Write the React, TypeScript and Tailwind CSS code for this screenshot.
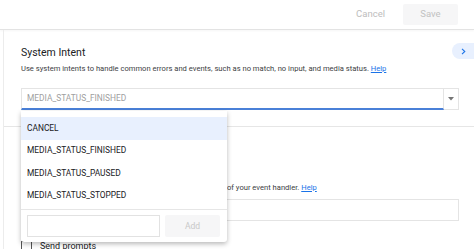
import React from "react"

const options = [
  "CANCEL",
  "MEDIA_STATUS_FINISHED",
  "MEDIA_STATUS_PAUSED",
  "MEDIA_STATUS_STOPPED",
]

export default function App() {
  return (
    <div className="relative h-[249px] w-[474px] overflow-hidden bg-white font-['Roboto',sans-serif] text-[#202124]">
      {/* header */}
      <div className="flex h-[30px] items-center justify-end border-b border-[#e3e3e3] pr-[16px] shadow-[0_1px_2px_rgba(0,0,0,0.04)]">
        <span className="mr-[18px] text-[9.5px] text-[#bdbdbd]">Cancel</span>
        <button className="h-[21px] w-[55px] rounded-[2px] bg-[#f6f6f7] text-[9.5px] text-[#c2c2c2]">
          Save
        </button>
      </div>

      <div className="ml-[3px] border-l border-[#ececec]">
        {/* system intent */}
        <section className="border-b border-[#e6e6e6] pb-[16px] pl-[17px] pr-[15px] pt-[16px]">
          <h2 className="text-[10.5px] leading-[14px] text-[#202124]">System Intent</h2>
          <p className="mt-[4px] text-[7.6px] leading-[10px] text-[#3c4043]">
            Use system intents to handle common errors and events, such as no match, no input, and media status.{" "}
            <span className="text-[#1a73e8] underline">Help</span>
          </p>
          <div className="mt-[14px] flex h-[22px]">
            <div className="flex flex-1 items-center border border-b-2 border-[#e4e4e4] border-b-[#4a80d8] pl-[5px] text-[8.4px] text-[#a0a0a0]">
              MEDIA_STATUS_FINISHED
            </div>
            <div className="flex w-[15px] items-center justify-center border border-l-0 border-[#e4e4e4]">
              <svg width="6" height="4" viewBox="0 0 6 4">
                <path d="M0 0h6L3 3.5z" fill="#757575" />
              </svg>
            </div>
          </div>
        </section>

        {/* webhook section, mostly under the open menu */}
        <section className="pl-[17px] pr-[15px] pt-[56px]">
          <p className="flex text-[7.6px] leading-[10px] text-[#3c4043]">
            <span className="w-[206px] shrink-0" />
            <span>
              of your event handler. <span className="text-[#1a73e8] underline">Help</span>
            </span>
          </p>
          <div className="mt-[6px] h-[22px] border border-[#e4e4e4]" />
          <div className="mt-[20px] flex items-start gap-[8px]">
            <div className="h-[11px] w-[11px] border-[1.5px] border-[#555]" />
            <span className="text-[9px] leading-[11px] text-[#202124]">Send prompts</span>
          </div>
        </section>
      </div>

      {/* side panel toggle */}
      <button className="absolute right-0 top-[43px] flex h-[16px] w-[22px] items-center justify-center rounded-l-[8px] bg-[#e8f0fe]">
        <svg width="5" height="7" viewBox="0 0 5 7" className="ml-[1px]">
          <path d="M1 0.8L3.8 3.5L1 6.2" fill="none" stroke="#1a73e8" strokeWidth="1.1" />
        </svg>
      </button>

      {/* open dropdown */}
      <div className="absolute left-[21px] top-[111px] w-[206px] rounded-b-[3px] bg-white pt-[6px] shadow-[0_2px_5px_rgba(0,0,0,0.28)]">
        {options.map((o, i) => (
          <div
            key={o}
            className={
              "flex h-[22.5px] items-center pl-[6px] text-[8.4px] text-[#202124] " +
              (i === 0 ? "bg-[#e8f0fe]" : "")
            }
          >
            {o}
          </div>
        ))}
        <div className="mt-[2px] flex gap-[5px] border-t border-[#e6e6e6] px-[6px] pb-[5px] pt-[5px]">
          <div className="h-[22px] w-[133px] border border-[#e2e2e2]" />
          <button className="h-[22px] w-[55px] rounded-[2px] bg-[#f6f6f7] text-[8.5px] text-[#c8c8c8]">
            Add
          </button>
        </div>
      </div>
    </div>
  )
}
